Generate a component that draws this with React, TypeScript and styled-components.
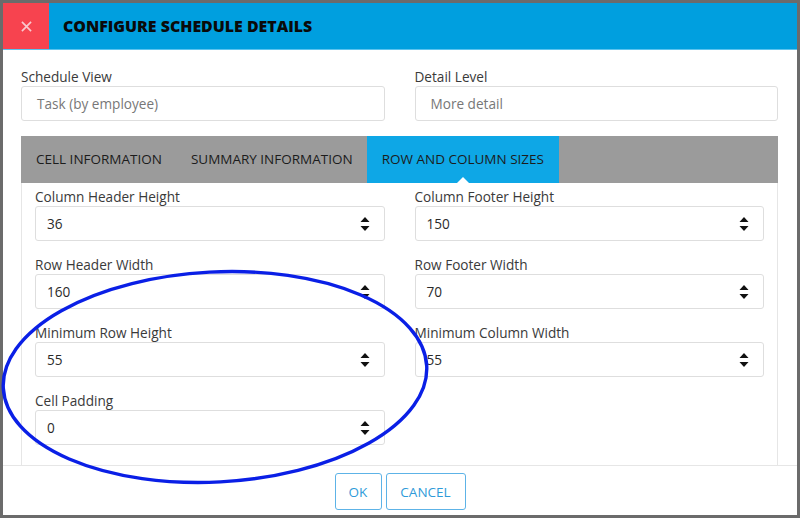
import React from "react";
import styled, { createGlobalStyle } from "styled-components";

const GlobalStyle = createGlobalStyle`
  html, body { margin: 0; padding: 0; }
  body {
    background: #6b6b6b;
    font-family: "Open Sans", "Liberation Sans", sans-serif;
    overflow: hidden;
  }
  * { box-sizing: border-box; }
`;

const Page = styled.div`
  position: relative;
  width: 800px;
  height: 518px;
  padding: 3px 3px 3px 3px;
`;

const Dialog = styled.div`
  width: 794px;
  height: 512px;
  background: #ffffff;
  display: flex;
  flex-direction: column;
`;

const Header = styled.div`
  height: 47px;
  display: flex;
  align-items: stretch;
  background: #009fdf;
  border-bottom: 1px solid #5cc3ee;
  flex-shrink: 0;
`;

const CloseButton = styled.div`
  width: 46px;
  background: #f7434f;
  display: flex;
  align-items: center;
  justify-content: center;
`;

const Title = styled.div`
  display: flex;
  align-items: center;
  padding-left: 14px;
  font-size: 15.9px;
  font-weight: 800;
  color: #0a0a0a;
`;

const Body = styled.div`
  flex: 1;
  min-height: 0;
  display: flex;
  flex-direction: column;
  padding: 18px 19px 0 18px;
`;

const TwoCols = styled.div<{ $gap: number }>`
  display: grid;
  grid-template-columns: 1fr 1fr;
  column-gap: ${(p) => p.$gap}px;
`;

const Field = styled.div`
  display: flex;
  flex-direction: column;
`;

const Label = styled.div`
  font-size: 13.6px;
  line-height: 18px;
  color: #3a3a3a;
  margin-bottom: 0;
`;

const Input = styled.div<{ $muted?: boolean }>`
  height: 35px;
  border: 1px solid #dedede;
  border-radius: 3px;
  display: flex;
  align-items: center;
  padding: 0 14px 0 ${(p) => (p.$muted ? 15 : 11)}px;
  font-size: 13.6px;
  color: ${(p) => (p.$muted ? "#777" : "#2a2a2a")};
  justify-content: space-between;
`;

const Tabs = styled.div`
  margin-top: 15px;
  flex: 1;
  min-height: 0;
  display: flex;
  flex-direction: column;
`;

const TabBar = styled.div`
  height: 47px;
  background: #9b9b9b;
  display: flex;
  flex-shrink: 0;
`;

const Tab = styled.div<{ $active?: boolean }>`
  position: relative;
  display: flex;
  align-items: center;
  padding: 0 14px 1px 15px;
  font-size: 13.5px;
  color: #1c1c1c;
  background: ${(p) => (p.$active ? "#0ea7e6" : "transparent")};
  padding-right: ${(p) => (p.$active ? 15 : 14)}px;
  ${(p) =>
    p.$active
      ? `&::after {
    content: "";
    position: absolute;
    left: 50%;
    bottom: 0;
    margin-left: -6px;
    border-left: 6px solid transparent;
    border-right: 6px solid transparent;
    border-bottom: 6px solid #ffffff;
  }`
      : ""}
`;

const Panel = styled.div`
  flex: 1;
  min-height: 0;
  overflow: hidden;
  border-left: 1px solid #e6e6e6;
  border-right: 1px solid #e6e6e6;
  padding: 5px 13px 0 13px;
  display: flex;
  flex-direction: column;
  gap: 15px;
`;

const Footer = styled.div`
  height: 50px;
  flex-shrink: 0;
  border-top: 1px solid #e6e6e6;
  display: flex;
  justify-content: center;
  align-items: flex-start;
  padding-top: 7px;
  gap: 4px;
`;

const Button = styled.div<{ $w: number }>`
  width: ${(p) => p.$w}px;
  height: 37px;
  border: 1px solid #5db3e7;
  border-radius: 3px;
  display: flex;
  align-items: center;
  justify-content: center;
  font-size: 13.5px;
  color: #2f9bd9;
`;

const Annotation = styled.svg`
  position: absolute;
  left: 0;
  top: 0;
  pointer-events: none;
`;

const Spinner = () => (
  <svg width="10" height="16" viewBox="0 0 10 16">
    <path d="M5 1 L9.5 6 L0.5 6 Z" fill="#111" />
    <path d="M0.5 10 L9.5 10 L5 15 Z" fill="#111" />
  </svg>
);

const CloseIcon = () => (
  <svg width="11" height="11" viewBox="0 0 12 12">
    <path d="M1 1 L11 11 M11 1 L1 11" stroke="#f9c9ce" strokeWidth="1.8" />
  </svg>
);

const NumberField = ({ label, value }: { label: string; value: string }) => (
  <Field>
    <Label>{label}</Label>
    <Input>
      <span>{value}</span>
      <Spinner />
    </Input>
  </Field>
);

const rows: [string, string, string?, string?][] = [
  ["Column Header Height", "36", "Column Footer Height", "150"],
  ["Row Header Width", "160", "Row Footer Width", "70"],
  ["Minimum Row Height", "55", "Minimum Column Width", "55"],
  ["Cell Padding", "0"],
];

export default function App() {
  return (
    <>
      <GlobalStyle />
      <Page>
        <Dialog>
          <Header>
            <CloseButton>
              <CloseIcon />
            </CloseButton>
            <Title>CONFIGURE SCHEDULE DETAILS</Title>
          </Header>
          <Body>
            <TwoCols $gap={30}>
              <Field>
                <Label>Schedule View</Label>
                <Input $muted>Task (by employee)</Input>
              </Field>
              <Field>
                <Label>Detail Level</Label>
                <Input $muted>More detail</Input>
              </Field>
            </TwoCols>
            <Tabs>
              <TabBar>
                <Tab>CELL INFORMATION</Tab>
                <Tab>SUMMARY INFORMATION</Tab>
                <Tab $active>ROW AND COLUMN SIZES</Tab>
              </TabBar>
              <Panel>
                {rows.map(([l1, v1, l2, v2]) => (
                  <TwoCols $gap={30} key={l1}>
                    <NumberField label={l1} value={v1} />
                    {l2 ? <NumberField label={l2} value={v2 as string} /> : <div />}
                  </TwoCols>
                ))}
              </Panel>
            </Tabs>
          </Body>
          <Footer>
            <Button $w={47}>OK</Button>
            <Button $w={80}>CANCEL</Button>
          </Footer>
        </Dialog>
        <Annotation width="800" height="518" viewBox="0 0 800 518">
          <ellipse
            cx="215"
            cy="377"
            rx="212"
            ry="105"
            transform="rotate(-3 215 377)"
            fill="none"
            stroke="#0a1fe6"
            strokeWidth="3.4"
          />
        </Annotation>
      </Page>
    </>
  );
}
